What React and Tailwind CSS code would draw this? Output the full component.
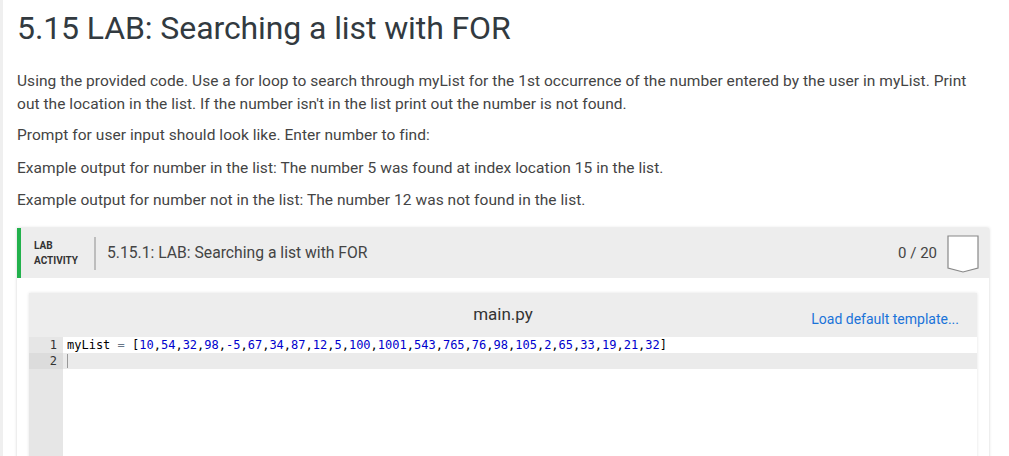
import React from "react";

const nums = [10,54,32,98,-5,67,34,87,12,5,100,1001,543,765,76,98,105,2,65,33,19,21,32];

export default function App() {
  return (
    <div className="w-[1009px] h-[456px] overflow-hidden bg-white border-l-[3px] border-[#efefef]" style={{fontFamily: "Roboto, 'Liberation Sans', sans-serif"}}>
      <div className="pl-[14px] pr-[14px]">
        <h1 className="pt-[8px] text-[32px] leading-[40px] text-[#323a40] tracking-[-0.1px]">5.15 LAB: Searching a list with FOR</h1>
        <div className="mt-[22px] w-[962px] text-[15.5px] leading-[23px] text-[#444] tracking-[0.05px]">
          <p>Using the provided code. Use a for loop to search through myList for the 1st occurrence of the number entered by the user in myList. Print out the location in the list. If the number isn't in the list print out the number is not found.</p>
          <p className="mt-[8px]">Prompt for user input should look like. Enter number to find:</p>
          <p className="mt-[10px]">Example output for number in the list: The number 5 was found at index location 15 in the list.</p>
          <p className="mt-[9px]">Example output for number not in the list: The number 12 was not found in the list.</p>
        </div>
        <div className="mt-[16px] w-[972px] shadow-[0_0_3px_rgba(0,0,0,0.18)]">
          <div className="h-[50px] bg-[#ededed] border-l-[4px] border-[#22b14c] flex items-center">
            <div className="pl-[13px] w-[73px] text-[10px] leading-[15px] font-bold text-[#333]">
              <div>LAB</div>
              <div>ACTIVITY</div>
            </div>
            <div className="w-[2px] h-[33px] bg-[#bdbdbd]"></div>
            <div className="ml-[11px] text-[15.7px] text-[#444] flex-1">5.15.1: LAB: Searching a list with FOR</div>
            <div className="text-[15px] text-[#444] mr-[10px]">0 / 20</div>
            <svg width="32" height="38" viewBox="0 0 32 38" className="mr-[10px] mt-[2px]">
              <path d="M1 1 H31 V33 L16 37 L1 33 Z" fill="#fff" stroke="#888" strokeWidth="1.2" />
            </svg>
          </div>
          <div className="pt-[15px] px-[12px] pb-[20px] bg-white">
            <div className="shadow-[0_0_3px_rgba(0,0,0,0.12)]">
              <div className="h-[44px] bg-[#ededed] relative flex items-center justify-center">
                <span className="text-[17px] text-[#333]">main.py</span>
                <span className="absolute right-[18px] top-[16px] text-[14px] text-[#1a73d9]">Load default template...</span>
              </div>
              <div className="flex h-[140px]" style={{fontFamily: "'DejaVu Sans Mono', 'Liberation Mono', monospace"}}>
                <div className="w-[34px] bg-[#e6e6e6] text-[12px] leading-[16px] text-[#333] text-right">
                  <div className="pr-[6px]">1</div>
                  <div className="pr-[6px] bg-[#dcdcdc]">2</div>
                </div>
                <div className="flex-1 text-[12px] leading-[16px]">
                  <div className="pl-[4px] whitespace-pre text-black">myList <span className="text-[#687687]">=</span> [{nums.map((n, i) => (
                    <React.Fragment key={i}>{i > 0 ? "," : ""}<span className="text-[#0000cd]">{n}</span></React.Fragment>
                  ))}]</div>
                  <div className="pl-[4px] h-[16px] bg-[#ebebeb] flex items-center"><div className="w-[1px] h-[14px] bg-[#999]"></div></div>
                </div>
              </div>
            </div>
          </div>
        </div>
      </div>
    </div>
  );
}
